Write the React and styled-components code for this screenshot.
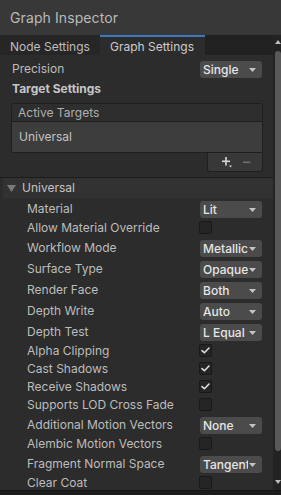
import React from "react";
import styled, { createGlobalStyle } from "styled-components";

const GlobalStyle = createGlobalStyle`
  html, body {
    margin: 0;
    padding: 0;
    background: #1e1e1e;
  }
  * {
    box-sizing: border-box;
  }
`;

const rows = [
  { label: "Material", kind: "drop", value: "Lit" },
  { label: "Allow Material Override", kind: "check", checked: false },
  { label: "Workflow Mode", kind: "drop", value: "Metallic" },
  { label: "Surface Type", kind: "drop", value: "Opaque" },
  { label: "Render Face", kind: "drop", value: "Both" },
  { label: "Depth Write", kind: "drop", value: "Auto" },
  { label: "Depth Test", kind: "drop", value: "L Equal" },
  { label: "Alpha Clipping", kind: "check", checked: true },
  { label: "Cast Shadows", kind: "check", checked: true },
  { label: "Receive Shadows", kind: "check", checked: true },
  { label: "Supports LOD Cross Fade", kind: "check", checked: false },
  { label: "Additional Motion Vectors", kind: "drop", value: "None" },
  { label: "Alembic Motion Vectors", kind: "check", checked: false },
  { label: "Fragment Normal Space", kind: "drop", value: "Tangent" },
  { label: "Clear Coat", kind: "check", checked: false },
];

const Arrow = () => (
  <svg width="7" height="4" viewBox="0 0 7 4">
    <polygon points="0,0 7,0 3.5,4" fill="#c4c4c4" />
  </svg>
);

const Dropdown = ({ value }) => (
  <DropBox>
    <DropText>{value}</DropText>
    <Arrow />
  </DropBox>
);

const Checkbox = ({ checked }) => (
  <CheckBox>
    {checked && (
      <svg width="9" height="7" viewBox="0 0 9 7">
        <polyline
          points="1,3.6 3.4,5.8 8,1"
          fill="none"
          stroke="#e2e2e2"
          strokeWidth="1.5"
          strokeLinecap="round"
          strokeLinejoin="round"
        />
      </svg>
    )}
  </CheckBox>
);

export const App = () => {
  return (
    <Window>
      <GlobalStyle />
      <Header>
        <Title>Graph Inspector</Title>
      </Header>
      <Main>
        <Pane>
          <TabBar>
            <Tab $w={100}>Node Settings</Tab>
            <Tab $w={105} $active>
              Graph Settings
            </Tab>
          </TabBar>
          <Body>
            <TopRow>
              <TopLabel>Precision</TopLabel>
              <Control>
                <Dropdown value="Single" />
              </Control>
            </TopRow>
            <Heading>Target Settings</Heading>
            <ListBox>
              <ListHeader>Active Targets</ListHeader>
              <ListItem>Universal</ListItem>
            </ListBox>
            <ListFooter>
              <FooterBtn>
                <svg width="11" height="11" viewBox="0 0 11 11">
                  <rect x="0" y="3.5" width="8" height="1.6" fill="#d6d6d6" />
                  <rect x="3.2" y="0" width="1.6" height="8.6" fill="#d6d6d6" />
                  <polygon points="7,8.6 10,8.6 8.5,10.4" fill="#d6d6d6" />
                </svg>
              </FooterBtn>
              <FooterBtn>
                <svg width="8" height="8" viewBox="0 0 8 8">
                  <rect x="0" y="3.5" width="7.5" height="1.6" fill="#6e6e6e" />
                </svg>
              </FooterBtn>
            </ListFooter>
            <Divider />
            <Foldout>
              <svg width="9" height="7" viewBox="0 0 9 7">
                <polygon points="0,0 9,0 4.5,7" fill="#7a7a7a" />
              </svg>
              <FoldoutTitle>Universal</FoldoutTitle>
            </Foldout>
            <Props>
              {rows.map((r) => (
                <PropRow key={r.label} $kind={r.kind}>
                  <PropLabel>{r.label}</PropLabel>
                  <Control>
                    {r.kind === "drop" ? (
                      <Dropdown value={r.value} />
                    ) : (
                      <Checkbox checked={r.checked} />
                    )}
                  </Control>
                </PropRow>
              ))}
            </Props>
          </Body>
        </Pane>
        <ScrollBar>
          <svg width="6" height="4" viewBox="0 0 6 4">
            <polygon points="0,4 6,4 3,0" fill="#bdbdbd" />
          </svg>
          <Thumb />
          <Spacer />
          <svg width="6" height="4" viewBox="0 0 6 4">
            <polygon points="0,0 6,0 3,4" fill="#bdbdbd" />
          </svg>
        </ScrollBar>
      </Main>
      <Footer />
    </Window>
  );
};

const Window = styled.div`
  width: 281px;
  height: 495px;
  display: flex;
  flex-direction: column;
  overflow: hidden;
  font-family: Inter, "Noto Sans", sans-serif;
  font-size: 12px;
  color: #bdbdbd;
  background-color: #2c2c2c;
`;
const Header = styled.div`
  height: 35px;
  flex-shrink: 0;
  display: flex;
  align-items: center;
  padding: 0 0 1px 10px;
  background-color: #383838;
`;
const Title = styled.div`
  font-size: 14px;
  color: #bababa;
  letter-spacing: 0.1px;
`;
const Main = styled.div`
  height: 455px;
  flex-shrink: 0;
  display: flex;
  flex-direction: row;
`;
const Pane = styled.div`
  flex: 1;
  display: flex;
  flex-direction: column;
  min-width: 0;
`;
const TabBar = styled.div`
  height: 20px;
  flex-shrink: 0;
  display: flex;
  flex-direction: row;
  background-color: #212121;
`;
const Tab = styled.div`
  width: ${(p) => p.$w}px;
  display: flex;
  align-items: center;
  padding: 0 0 0 10px;
  color: ${(p) => (p.$active ? "#cccccc" : "#bdbdbd")};
  background-color: ${(p) => (p.$active ? "#2c2c2c" : "#262626")};
  border-top: 2px solid ${(p) => (p.$active ? "#3a79bb" : "transparent")};
`;
const Body = styled.div`
  flex: 1;
  display: flex;
  flex-direction: column;
  padding: 4px 0 0 0;
  background-color: #2c2c2c;
`;
const TopRow = styled.div`
  height: 21px;
  display: flex;
  align-items: center;
  padding: 0 11px 0 12px;
`;
const TopLabel = styled.div`
  flex: 1;
  padding-bottom: 2px;
`;
const Heading = styled.div`
  height: 16px;
  display: flex;
  align-items: center;
  padding-left: 12px;
  font-weight: 700;
  color: #c6c6c6;
`;
const ListBox = styled.div`
  margin: 7px 10px 0 11px;
  border: 1px solid #1f1f1f;
  border-radius: 3px 3px 0 3px;
  overflow: hidden;
`;
const ListHeader = styled.div`
  height: 18px;
  display: flex;
  align-items: center;
  padding-left: 6px;
  color: #aeaeae;
  background-color: #2e2e2e;
  border-bottom: 1px solid #1f1f1f;
`;
const ListItem = styled.div`
  height: 30px;
  display: flex;
  align-items: center;
  padding: 0 0 1px 7px;
  color: #c2c2c2;
  background-color: #3d3d3d;
`;
const ListFooter = styled.div`
  align-self: flex-end;
  width: 56px;
  height: 19px;
  margin-right: 10px;
  display: flex;
  align-items: center;
  justify-content: center;
  gap: 10px;
  padding-left: 2px;
  background-color: #383838;
  border: 1px solid #1f1f1f;
  border-top: none;
  border-radius: 0 0 3px 3px;
`;
const FooterBtn = styled.div`
  display: flex;
  align-items: center;
`;
const Divider = styled.div`
  height: 1px;
  margin-top: 5px;
  background-color: #1c1c1c;
`;
const Foldout = styled.div`
  height: 20px;
  margin-left: 3px;
  display: flex;
  align-items: center;
  gap: 6px;
  padding-left: 4px;
  background-color: #323232;
`;
const FoldoutTitle = styled.div`
  color: #c4c4c4;
  padding-bottom: 1px;
`;
const Props = styled.div`
  display: flex;
  flex-direction: column;
  padding-top: 1px;
`;
const PropRow = styled.div`
  height: ${(p) => (p.$kind === "drop" ? 21 : 18)}px;
  display: flex;
  align-items: ${(p) => (p.$kind === "drop" ? "center" : "flex-start")};
  padding: 0 11px 0 27px;
`;
const PropLabel = styled.div`
  flex: 1;
  white-space: nowrap;
  line-height: 15px;
  padding-bottom: 2px;
`;
const Control = styled.div`
  width: 63px;
  display: flex;
  align-items: center;
`;
const DropBox = styled.div`
  width: 62px;
  height: 17px;
  margin-left: 1px;
  display: flex;
  align-items: center;
  padding: 0 6px 0 3px;
  border-radius: 3px;
  background-color: #4b4b4b;
`;
const DropText = styled.div`
  flex: 1;
  min-width: 0;
  overflow: hidden;
  white-space: nowrap;
  font-weight: 500;
  color: #e6e6e6;
  margin-right: 1px;
`;
const CheckBox = styled.div`
  width: 13px;
  height: 13px;
  margin-top: 1px;
  display: flex;
  align-items: center;
  justify-content: center;
  border: 1px solid #191919;
  border-radius: 2px;
  background-color: #252525;
`;
const ScrollBar = styled.div`
  width: 8px;
  flex-shrink: 0;
  display: flex;
  flex-direction: column;
  align-items: center;
  padding: 5px 0 6px 2px;
  background-color: #232323;
`;
const Thumb = styled.div`
  width: 6px;
  height: 400px;
  margin-top: 7px;
  border-radius: 3px;
  background-color: #595959;
`;
const Spacer = styled.div`
  flex: 1;
`;
const Footer = styled.div`
  flex: 1;
  background-color: #1c1c1c;
  border-top: 1px solid #141414;
`;

export default App;
